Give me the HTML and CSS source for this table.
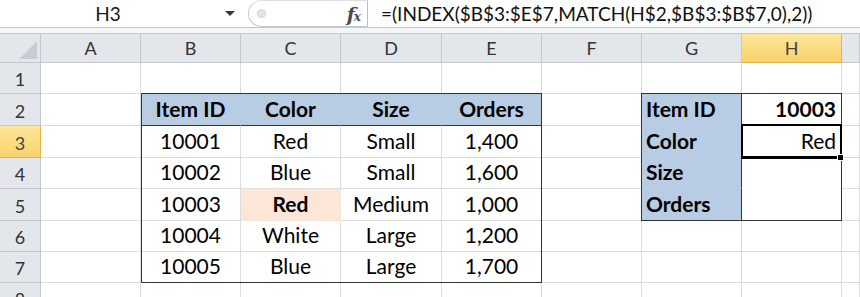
FILE: index.html
```html
<!DOCTYPE html>
<html>
<head>
<meta charset="utf-8">
<link rel="stylesheet" href="styles.css">
</head>
<body>
<div class="fbar">
  <div class="namebox"><span class="ref">H3</span><span class="caret"></span></div>
  <div class="pill"><span class="knob"></span><span class="fx"><span class="fx-f">f</span><span class="fx-x">x</span></span></div>
  <div class="formula">=(INDEX($B$3:$E$7,MATCH(H$2,$B$3:$B$7,0),2))</div>
</div>
<div class="strip"></div>
<div class="stack">
<div class="sheet">
  <div class="c corner"><svg width="18" height="18" viewBox="0 0 18 18"><polygon points="18,0 18,18 0,18" fill="#c9cdd3"/></svg></div>
  <div class="c ch">A</div><div class="c ch">B</div><div class="c ch">C</div><div class="c ch">D</div><div class="c ch">E</div><div class="c ch">F</div><div class="c ch">G</div><div class="c ch chsel">H</div><div class="c ch"></div>

  <div class="c rh">1</div><div class="c"></div><div class="c"></div><div class="c"></div><div class="c"></div><div class="c"></div><div class="c"></div><div class="c"></div><div class="c"></div><div class="c"></div>

  <div class="c rh">2</div><div class="c"></div>
  <div class="c hdr">Item ID</div><div class="c hdr">Color</div><div class="c hdr">Size</div><div class="c hdr">Orders</div>
  <div class="c"></div><div class="c lbl">Item ID</div><div class="c val b">10003</div><div class="c"></div>

  <div class="c rh rhsel">3</div><div class="c"></div>
  <div class="c">10001</div><div class="c">Red</div><div class="c">Small</div><div class="c">1,400</div>
  <div class="c"></div><div class="c lbl">Color</div><div class="c val">Red</div><div class="c"></div>

  <div class="c rh">4</div><div class="c"></div>
  <div class="c">10002</div><div class="c">Blue</div><div class="c">Small</div><div class="c">1,600</div>
  <div class="c"></div><div class="c lbl">Size</div><div class="c val"></div><div class="c"></div>

  <div class="c rh">5</div><div class="c"></div>
  <div class="c">10003</div><div class="c peach b">Red</div><div class="c">Medium</div><div class="c">1,000</div>
  <div class="c"></div><div class="c lbl">Orders</div><div class="c val"></div><div class="c"></div>

  <div class="c rh">6</div><div class="c"></div>
  <div class="c">10004</div><div class="c">White</div><div class="c">Large</div><div class="c">1,200</div>
  <div class="c"></div><div class="c"></div><div class="c"></div><div class="c"></div>

  <div class="c rh">7</div><div class="c"></div>
  <div class="c">10005</div><div class="c">Blue</div><div class="c">Large</div><div class="c">1,700</div>
  <div class="c"></div><div class="c"></div><div class="c"></div><div class="c"></div>

  <div class="c rh">8</div><div class="c"></div><div class="c"></div><div class="c"></div><div class="c"></div><div class="c"></div><div class="c"></div><div class="c"></div><div class="c"></div><div class="c"></div>
</div>
<div class="sheet overlay">
  <div class="tbl-box"></div>
  <div class="lookup-box"></div>
  <div class="selection"><span class="handle"></span></div>
</div>
</div>
</body>
</html>
```

FILE: styles.css
```css
html, body {
  margin: 0;
  padding: 0;
}
body {
  width: 860px;
  height: 297px;
  overflow: hidden;
  background: #fff;
  font-family: Lato, "Open Sans", sans-serif;
  color: #000;
}

/* formula bar */
.fbar {
  display: flex;
  height: 28px;
  box-sizing: border-box;
  border-bottom: 1px solid #c4c8ce;
  background: #fff;
}
.namebox {
  width: 244px;
  display: flex;
  align-items: center;
}
.ref {
  width: 216px;
  text-align: center;
  font-size: 19px;
  color: #1a1a1a;
}
.caret {
  margin-left: 9px;
  width: 0;
  height: 0;
  border-left: 5px solid transparent;
  border-right: 5px solid transparent;
  border-top: 5px solid #3a3a3a;
}
.pill {
  margin-left: 4px;
  width: 120px;
  box-sizing: border-box;
  border: 1px solid #c4c8ce;
  border-right-color: #b9bec5;
  border-top-color: #dde0e4;
  border-radius: 14px 0 0 14px;
  display: flex;
  align-items: center;
  justify-content: space-between;
  padding: 0 6px 0 8px;
  background: #fff;
}
.knob {
  width: 7px;
  height: 7px;
  border-radius: 50%;
  background: #e2e4e7;
  border: 1px solid #d0d3d8;
}
.fx {
  font-family: "DejaVu Serif", "Liberation Serif", serif;
  font-style: italic;
  color: #4a4a4a;
  display: flex;
  align-items: baseline;
}
.fx-f {
  font-size: 19px;
  font-weight: bold;
}
.fx-x {
  font-size: 12px;
  font-weight: bold;
  margin-left: -1px;
}
.formula {
  flex: 1;
  display: flex;
  align-items: center;
  padding-left: 13px;
  font-size: 19px;
  color: #111;
  white-space: nowrap;
  overflow: hidden;
}
.strip {
  height: 6px;
  box-sizing: border-box;
  background: #f5f6f8;
  border-bottom: 1px solid #c4c8ce;
}

/* sheet grid: cells layer and overlay layer stacked in one grid area */
.stack {
  display: grid;
}
.stack > .sheet {
  grid-area: 1 / 1;
}
.sheet {
  display: grid;
  grid-template-columns: 41px 100px 100px 100px 101px 100px 100px 100px 100px 1fr;
  grid-template-rows: 29px 31px 32px 32px 31px 32px 31px 31px 31px;
}
.overlay {
  pointer-events: none;
}
.c {
  box-sizing: border-box;
  border-right: 1px solid #dadcdd;
  border-bottom: 1px solid #dadcdd;
  display: flex;
  align-items: flex-end;
  justify-content: center;
  padding-bottom: 4px;
  font-size: 21px;
  line-height: 24px;
  white-space: nowrap;
  overflow: hidden;
}
.corner {
  background: #e3e6ea;
  border-color: #c4c8ce;
  align-items: flex-end;
  justify-content: flex-end;
  padding: 0 3px 3px 0;
}
.ch, .rh {
  background: #e3e6ea;
  border-color: #c4c8ce;
  color: #333;
  font-size: 18px;
  line-height: 22px;
  align-items: center;
  padding: 0;
}
.rh {
  padding-top: 2px;
}
.chsel, .rhsel {
  background: linear-gradient(#fde69c, #f8d36c);
  border-color: #e2b24b;
  color: #444;
}
.b {
  font-weight: 700;
}
.hdr {
  background: #b8cce4;
  border-right-color: #b8cce4;
  border-bottom-color: #333;
  font-weight: 700;
}
.peach {
  background: #fce6d7;
  border-color: #fce6d7;
}
.lbl {
  background: #b8cce4;
  border-bottom-color: #b8cce4;
  border-right-color: #333;
  justify-content: flex-start;
  padding-left: 4px;
  font-weight: 700;
}
.val {
  background: #fff;
  border-bottom-color: #fff;
  justify-content: flex-end;
  padding-right: 5px;
}

.tbl-box {
  grid-column: 3 / 7;
  grid-row: 3 / 9;
  margin-top: -1px;
  border: 1px solid #333;
}
.lookup-box {
  grid-column: 8 / 10;
  grid-row: 3 / 7;
  margin: -1px 0 0 -1px;
  border: 1px solid #333;
}
.selection {
  grid-column: 9 / 10;
  grid-row: 4 / 5;
  margin: -2px 0 -1px -1px;
  border: 2px solid #000;
  border-bottom-width: 3px;
  position: relative;
}
.handle {
  position: absolute;
  right: -4px;
  bottom: -5px;
  width: 5px;
  height: 5px;
  background: #000;
  border: 1px solid #fff;
}
```
